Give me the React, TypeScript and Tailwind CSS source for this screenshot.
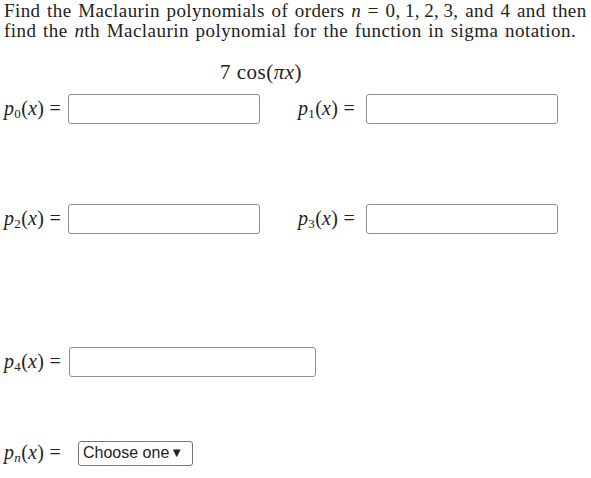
import React from "react";

const serif = { fontFamily: '"Liberation Serif", "Times New Roman", serif' };

function P({ sub, italicSub }: { sub: string; italicSub?: boolean }) {
  return (
    <span
      className="whitespace-nowrap text-[20px] leading-[24px] tracking-[0.3px] text-[#222]"
      style={serif}
    >
      <i>p</i>
      <sub className={italicSub ? "text-[13px] italic" : "text-[13px] not-italic"}>{sub}</sub>(<i>x</i>) =
    </span>
  );
}

function Box({ w }: { w: string }) {
  return <div className={`h-[30px] rounded-[3px] border border-[#8f8f8f] bg-white ${w}`} />;
}

export default function App() {
  return (
    <div className="h-[478px] w-[591px] bg-white pl-[4px] pt-[1px] text-[#222]" style={serif}>
      <div className="text-[19px] leading-[20px] tracking-[0.4px] [word-spacing:1.5px]">
        <div className="whitespace-nowrap">
          Find the Maclaurin polynomials of orders <i>n</i> = 0,{"\u2009"}1,{"\u2009"}2,{"\u2009"}3, and 4 and
          then
        </div>
        <div className="whitespace-nowrap tracking-[0.45px]">
          find the <i>n</i>th Maclaurin polynomial for the function in sigma notation.
        </div>
      </div>
      <div className="mt-[20px] w-[514px] text-center text-[21px] leading-[22px] tracking-[0.5px]">
        7 cos(<i>πx</i>)
      </div>
      <div className="mt-[11px] flex items-center">
        <div className="w-[64px]">
          <P sub="0" />
        </div>
        <Box w="w-[192px]" />
        <div className="ml-[38px] w-[68px]">
          <P sub="1" />
        </div>
        <Box w="w-[192px]" />
      </div>
      <div className="mt-[80px] flex items-center">
        <div className="w-[64px]">
          <P sub="2" />
        </div>
        <Box w="w-[192px]" />
        <div className="ml-[38px] w-[68px]">
          <P sub="3" />
        </div>
        <Box w="w-[192px]" />
      </div>
      <div className="mt-[113px] flex items-center">
        <div className="w-[65px]">
          <P sub="4" />
        </div>
        <Box w="w-[247px]" />
      </div>
      <div className="mt-[63px] flex items-center">
        <div className="w-[74px]">
          <P sub="n" italicSub />
        </div>
        <div
          className="flex h-[25px] w-[115px] items-center rounded-[3px] border border-[#767676] bg-white pl-[4px] text-[16px] text-[#222]"
          style={{ fontFamily: '"Liberation Sans", Arial, sans-serif' }}
        >
          Choose one<span className="ml-[1px] text-[13px]">▼</span>
        </div>
      </div>
    </div>
  );
}
